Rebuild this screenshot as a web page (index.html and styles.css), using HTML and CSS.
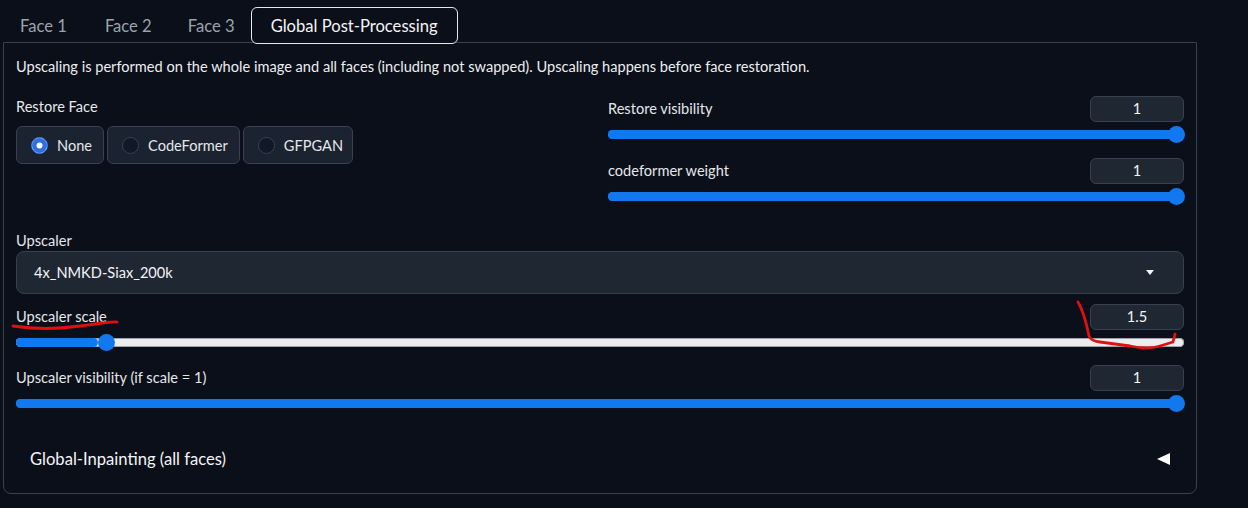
FILE: index.html
```html
<!DOCTYPE html>
<html>
<head>
<meta charset="utf-8">
<link rel="stylesheet" href="styles.css">
</head>
<body>
<div class="wrap">
  <div class="tabs">
    <div class="tab t1">Face 1</div>
    <div class="tab t2">Face 2</div>
    <div class="tab t3">Face 3</div>
    <div class="tab active">Global Post-Processing</div>
  </div>
  <div class="panel">
    <p class="desc">Upscaling is performed on the whole image and all faces (including not swapped). Upscaling happens before face restoration.</p>
    <div class="row">
      <div class="col">
        <div class="label">Restore Face</div>
        <div class="radios">
          <div class="radio sel"><span class="dot"></span>None</div>
          <div class="radio"><span class="dot"></span>CodeFormer</div>
          <div class="radio"><span class="dot"></span>GFPGAN</div>
        </div>
      </div>
      <div class="col">
        <div class="slider-block">
          <div class="head"><span class="label">Restore visibility</span><div class="num">1</div></div>
          <div class="track"><div class="fill" style="width:100%"></div><div class="thumb" style="left:100%"></div></div>
        </div>
        <div class="slider-block">
          <div class="head"><span class="label">codeformer weight</span><div class="num">1</div></div>
          <div class="track"><div class="fill" style="width:100%"></div><div class="thumb" style="left:100%"></div></div>
        </div>
      </div>
    </div>
    <div class="label up-label">Upscaler</div>
    <div class="dropdown"><span>4x_NMKD-Siax_200k</span><span class="caret"></span></div>
    <div class="slider-block scale">
      <div class="head"><span class="label">Upscaler scale</span><div class="num">1.5</div></div>
      <div class="track light"><div class="fill" style="width:7.14%"></div><div class="thumb" style="left:7.14%"></div></div>
    </div>
    <div class="slider-block vis">
      <div class="head"><span class="label">Upscaler visibility (if scale = 1)</span><div class="num">1</div></div>
      <div class="track"><div class="fill" style="width:100%"></div><div class="thumb" style="left:100%"></div></div>
    </div>
    <div class="accordion"><span>Global-Inpainting (all faces)</span><span class="tri"></span></div>
  </div>
</div>
<svg class="marks" width="1248" height="508" viewBox="0 0 1248 508">
  <path d="M13,326 Q45,331 80,326 T117,322" />
  <path d="M1078,302 C1084,312 1087,326 1089,336 Q1091,341 1100,342 L1130,346 Q1148,350 1160,346 L1173,342 L1175,334" />
</svg>
</body>
</html>
```

FILE: styles.css
```css
* { box-sizing: border-box; }
body {
  margin: 0;
  background: #0b0f19;
  font-family: "Lato", "Liberation Sans", sans-serif;
  color: #e5e7eb;
  font-size: 14.6px;
  width: 1248px;
  height: 508px;
  overflow: hidden;
  position: relative;
}
.wrap { padding: 7px 51px 0 3px; }
.tabs {
  display: flex;
  height: 37px;
  position: relative;
  z-index: 2;
  margin-bottom: -2px;
}
.tab {
  font-size: 16.6px;
  color: #9ca3af;
  display: flex;
  align-items: center;
  height: 37px;
}
.tab.t1 { padding: 0 19px 0 17px; }
.tab.t2 { padding: 0 18px 0 19px; }
.tab.t3 { padding: 0 16px 0 18px; }
.tab.active {
  color: #f3f4f6;
  border: 1px solid #e5e7eb;
  border-radius: 6px;
  background: #0b0f19;
  padding: 0 19px;
}
.panel {
  border: 1px solid #374151;
  border-radius: 0 0 8px 8px;
  padding: 14px 12px 0 12px;
  height: 452px;
  display: flex;
  flex-direction: column;
}
.desc {
  margin: 0;
  line-height: 20px;
  color: #eceef1;
}
.row {
  display: flex;
  gap: 16px;
  margin-top: 19px;
}
.col { flex: 1; display: flex; flex-direction: column; }
.label { color: #e5e7eb; line-height: 20px; }
.col > .label { margin-top: 1px; }
.radios { display: flex; gap: 3px; margin-top: 9px; }
.radio {
  display: flex;
  align-items: center;
  gap: 9px;
  height: 38px;
  padding: 0 11px 0 14px;
  background: #1b2230;
  border: 1px solid #374151;
  border-radius: 6px;
  color: #e5e7eb;
}
.radio:last-child { padding-right: 9px; }
.dot {
  width: 17px; height: 17px;
  border-radius: 50%;
  border: 1px solid #374151;
  background: #111827;
}
.radio.sel .dot {
  border-color: #2f6fe0;
  box-shadow: inset 0 0 0 4.5px #2f6fe0;
  background: #fff;
}
.slider-block { display: flex; flex-direction: column; }
.slider-block + .slider-block { margin-top: 15px; }
.head {
  display: flex;
  justify-content: space-between;
  align-items: center;
  height: 26px;
}
.num {
  width: 94px;
  height: 26px;
  background: #1f2733;
  border: 1px solid #374151;
  border-radius: 6px;
  text-align: center;
  line-height: 24px;
  color: #f3f4f6;
}
.track {
  position: relative;
  height: 9px;
  margin: 8px 8px 4px 8px;
  border-radius: 5px;
}
.track::before {
  content: "";
  position: absolute;
  left: -8px; right: -8px; top: 0; bottom: 0;
  border-radius: 5px;
  background: #1278f0;
}
.track.light::before {
  background: #ececec;
  box-shadow: inset 0 0 0 1px #9ca3af;
}
.fill {
  position: absolute;
  left: -8px; top: 0; bottom: 0;
  background: #1278f0;
  border-radius: 5px;
}
.thumb {
  position: absolute;
  top: 50%;
  width: 17px; height: 17px;
  margin: -8.5px 0 0 -8.5px;
  border-radius: 50%;
  background: #1278f0;
}
.up-label { margin-top: 26px; }
.dropdown {
  height: 43px;
  background: #1f2733;
  border: 1px solid #374151;
  border-radius: 8px;
  display: flex;
  align-items: center;
  justify-content: space-between;
  padding: 0 29px 0 17px;
  color: #f3f4f6;
}
.caret {
  width: 0; height: 0;
  border-left: 4.5px solid transparent;
  border-right: 4.5px solid transparent;
  border-top: 5px solid #f3f4f6;
}
.slider-block.scale { margin-top: 10px; }
.slider-block.vis { margin-top: 14px; }
.accordion {
  display: flex;
  justify-content: space-between;
  align-items: center;
  margin-top: 35px;
  padding: 0 14px;
  font-size: 16.6px;
  color: #f3f4f6;
  height: 24px;
}
.tri {
  width: 0; height: 0;
  border-top: 6.5px solid transparent;
  border-bottom: 6.5px solid transparent;
  border-right: 13px solid #fff;
}
.marks {
  position: absolute;
  left: 0; top: 0;
  pointer-events: none;
}
.marks path {
  fill: none;
  stroke: #e01010;
  stroke-width: 2.8;
  stroke-linecap: round;
  stroke-linejoin: round;
}
```
